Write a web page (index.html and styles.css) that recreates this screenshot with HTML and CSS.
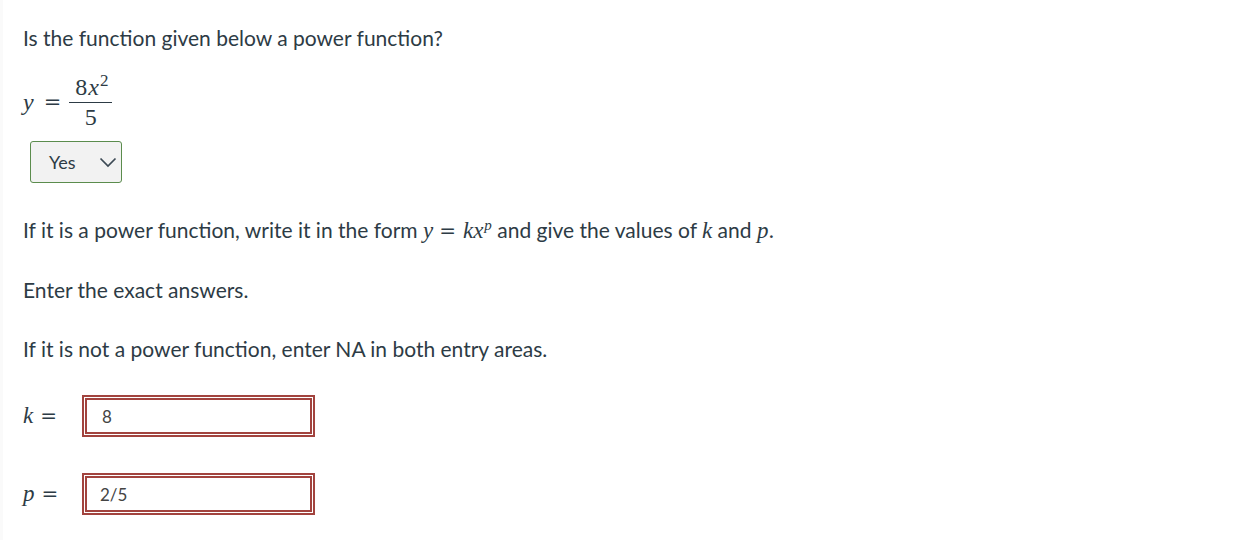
FILE: index.html
```html
<!DOCTYPE html>
<html>
<head>
<meta charset="utf-8">
<link rel="stylesheet" href="styles.css">
</head>
<body>
<div class="page">
  <p class="q">Is the function given below a power function?</p>
  <div class="eq">
    <span class="mi">y</span><span class="mo">=</span>
    <span class="frac"><span class="num">8<span class="mi">x</span><sup>2</sup></span><span class="den">5</span></span>
  </div>
  <div class="select"><span>Yes</span>
    <svg class="chev" width="18" height="11" viewBox="0 0 18 11"><path d="M1.5 1.5 L9 9 L16.5 1.5" fill="none" stroke="#3d4a55" stroke-width="1.7"/></svg>
  </div>
  <p class="t1">If it is a power function, write it in the form <span class="m"><span class="mi">y</span><span class="mo2">=</span><span class="mi">k</span><span class="mi">x</span><sup class="mi">p</sup></span> and give the values of <span class="m mi">k</span> and <span class="m"><span class="mi">p</span>.</span></p>
  <p class="t2">Enter the exact answers.</p>
  <p class="t3">If it is not a power function, enter NA in both entry areas.</p>
  <div class="row r1"><span class="lab"><span class="mi">k</span><span class="mo">=</span></span><div class="box"><div class="inner">8</div></div></div>
  <div class="row r2"><span class="lab"><span class="mi">p</span><span class="mo">=</span></span><div class="box"><div class="inner">2/5</div></div></div>
</div>
</body>
</html>
```
FILE: styles.css
```css
html, body { margin: 0; padding: 0; background: #fff; }
body { font-family: Lato, "Open Sans", sans-serif; color: #2d3b45; }
.page { padding: 23px 0 0 20px; border-left: 3px solid #fafafa; min-height: 540px; box-sizing: border-box; }
p { margin: 0; font-size: 21px; line-height: 30px; }
.mi { font-family: "Liberation Serif", serif; font-style: italic; }
.mo { font-family: "DejaVu Serif", serif; font-size: 21px; margin: 0 7px 0 10px; }
.eq { display: flex; align-items: center; font-family: "Liberation Serif", serif; font-size: 24px; margin-top: 21px; height: 56px; }
.frac { display: inline-flex; flex-direction: column; align-items: center; margin-left: 1px; }
.num { padding: 0 4px 3px 6px; border-bottom: 1px solid #2d3b45; line-height: 24px; }
.num .mi { margin-left: 1px; }
.num sup { font-size: 17px; font-style: normal; vertical-align: 9px; line-height: 0; margin-left: 1px; }
.den { line-height: 26px; padding-top: 1px; }
.select { display: flex; align-items: center; justify-content: space-between; width: 90px; height: 40px; box-sizing: content-box; border: 1px solid #5b8c4d; border-radius: 3px; background: #f2f2f2; margin: 11px 0 0 7px; padding: 0; font-size: 18px; color: #2d3b45; }
.select span { margin-left: 18px; }
.chev { margin-right: 4px; }
.t1 { margin-top: 32px; }
.m { font-family: "Liberation Serif", serif; font-size: 23px; }
.mo2 { font-family: "DejaVu Serif", serif; font-size: 20px; font-style: normal; margin: 0 7px 0 6px; }
.t1 sup { font-size: 15px; vertical-align: 8px; line-height: 0; margin-left: 1px; }
.t2 { margin-top: 29px; }
.t3 { margin-top: 29px; }
.row { display: flex; align-items: center; }
.r1 { margin-top: 31px; }
.r2 { margin-top: 36px; }
.lab { width: 59px; font-size: 23px; font-family: "Liberation Serif", serif; display: flex; align-items: center; }
.lab .mo { margin: 0 0 0 7px; font-size: 20px; }
.box { width: 227px; height: 36px; border: 2px solid #a2433e; padding: 1px; background: #fff; }
.inner { height: 100%; box-sizing: border-box; border: 2px solid #a2433e; display: flex; align-items: center; padding-left: 15px; font-size: 17px; color: #444; }
.r2 .inner { padding-left: 13px; }
```
